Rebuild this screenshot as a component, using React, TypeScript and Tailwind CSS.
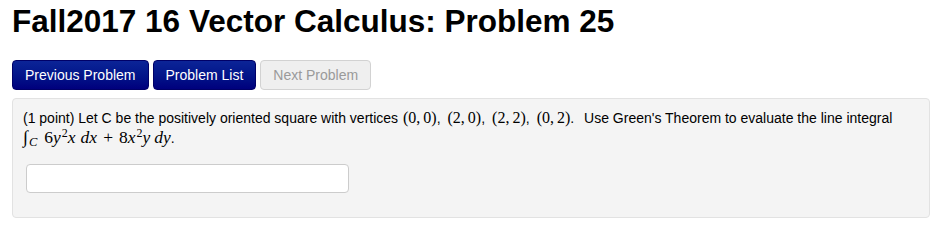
import React from 'react';

const sans = { fontFamily: '"Liberation Sans", Arial, sans-serif' };

function Pt({ a, b }: { a: string; b: string }) {
  return (
    <span className="inline-block ml-[1px] text-[16px] leading-none [font-family:'Liberation_Serif',serif]">
      ({a},<span className="inline-block w-[3px]" />
      {b})
    </span>
  );
}

// gap used between the listed vertices
function Gap() {
  return <span className="inline-block w-[6px]" />;
}

export default function App() {
  return (
    <div className="bg-white text-black pl-[12px] pt-[3px] w-[945px] h-[227px]" style={sans}>
      <h1 className="text-[31.5px] leading-[36px] font-bold m-0">Fall2017 16 Vector Calculus: Problem 25</h1>

      {/* nav buttons */}
      <div className="flex gap-[4px] mt-[21px]">
        <button className="h-[30px] px-[12px] rounded-[4px] border border-[#000068] bg-gradient-to-b from-[#0c2497] to-[#00007d] text-white text-[14px]">
          Previous Problem
        </button>
        <button className="h-[30px] px-[12px] rounded-[4px] border border-[#000068] bg-gradient-to-b from-[#0c2497] to-[#00007d] text-white text-[14px]">
          Problem List
        </button>
        <button disabled className="h-[30px] px-[12px] rounded-[4px] border border-[#d2d2d2] bg-[#efefef] text-[#9a9a9a] text-[14px]">
          Next Problem
        </button>
      </div>

      {/* problem body */}
      <div className="mt-[8px] w-[918px] h-[120px] bg-[#f4f4f4] border border-[#e2e2e2] rounded-[4px] px-[10px] pt-[9px]">
        <div className="text-[14px] leading-[20px]">
          (1 point) Let C be the positively oriented square with vertices <Pt a="0" b="0" />,<Gap />
          <Pt a="2" b="0" />,<Gap />
          <Pt a="2" b="2" />,<Gap />
          <Pt a="0" b="2" />.<span className="inline-block w-[6px]" /> Use Green's Theorem to evaluate the line integral
          <br />
          <span className="inline-block text-[17.5px] leading-none [font-family:'Liberation_Serif',serif]">
            <span className="text-[18px]">∫</span>
            <sub className="italic text-[12.5px] ml-[1px] mr-[7px]">C</sub>
            6<i>y</i>
            <sup className="text-[12px] ml-[1px]">2</sup>
            <i>x</i>
            <i className="ml-[5px]">dx</i>
            <span className="mx-[6px]">+</span>8<i>x</i>
            <sup className="text-[12px] ml-[1px]">2</sup>
            <i>y</i>
            <i className="ml-[4px]">dy</i>
          </span>
          .
        </div>
        <input
          type="text"
          className="block mt-[16px] ml-[3px] w-[323px] h-[29px] bg-white border border-[#cccccc] rounded-[4px]"
        />
      </div>
    </div>
  );
}
